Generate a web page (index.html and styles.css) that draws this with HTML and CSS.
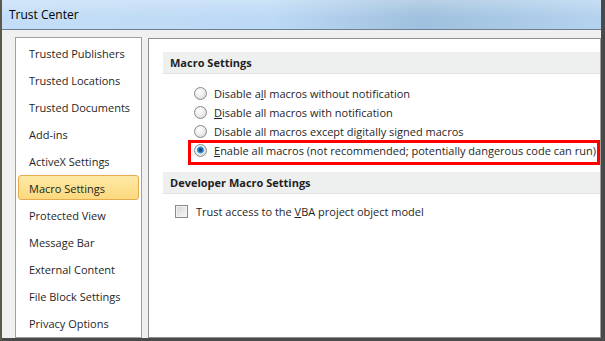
FILE: index.html
```html
<!DOCTYPE html>
<html lang="en">

<head>
    <meta charset="UTF-8">
    <title>Trust Center</title>
    <link rel="stylesheet" href="styles.css">
</head>

<body>
    <div class="window">
        <div class="titlebar">Trust Center</div>

        <div class="content">
            <ul class="nav">
                <li>Trusted Publishers</li>
                <li>Trusted Locations</li>
                <li>Trusted Documents</li>
                <li>Add-ins</li>
                <li>ActiveX Settings</li>
                <li class="selected">Macro Settings</li>
                <li>Protected View</li>
                <li>Message Bar</li>
                <li>External Content</li>
                <li>File Block Settings</li>
                <li>Privacy Options</li>
            </ul>

            <div class="main">
                <div class="section-header">Macro Settings</div>
                <div class="options">
                    <div class="option"><span class="radio"></span><span>Disable a<u>l</u>l macros without notification</span></div>
                    <div class="option"><span class="radio"></span><span><u>D</u>isable all macros with notification</span></div>
                    <div class="option"><span class="radio"></span><span>Disable all macros except di<u>g</u>itally signed macros</span></div>
                    <div class="option highlighted"><span class="radio checked"></span><span><u>E</u>nable all macros (not recommended; potentially dangerous code can run)</span></div>
                </div>

                <div class="section-header dev">Developer Macro Settings</div>
                <div class="options dev">
                    <div class="option"><span class="checkbox"></span><span>Trust access to the <u>V</u>BA project object model</span></div>
                </div>
            </div>
        </div>
    </div>
</body>

</html>
```

FILE: styles.css
```css
html,
body {
    margin: 0;
    width: 605px;
    height: 341px;
    overflow: hidden;
    background-color: #5b5a48;
}

body {
    font-family: "Open Sans", "Noto Sans", sans-serif;
    font-size: 11px;
    color: #1f1f1f;
}

.window {
    margin-left: 2px;
    width: 599px;
    height: 338px;
    background-color: #f0f0f0;
    border-right: 4px solid #4a4a4a;
    border-bottom: 3px solid #4a4a4a;
    display: flex;
    flex-direction: column;
}

.titlebar {
    height: 29px;
    line-height: 29px;
    padding-left: 7px;
    font-size: 12px;
    color: #000;
    border-bottom: 1px solid #6b7f95;
    background:
        linear-gradient(to bottom, rgba(255, 255, 255, 0.25), rgba(255, 255, 255, 0) 60%),
        linear-gradient(to right, #c4def7 0%, #bcd9f5 45%, #9fc0de 70%, #a9c9e6 85%, #b4d3ef 100%);
}

.content {
    flex: 1;
    display: flex;
    gap: 6px;
    padding: 7px 0 1px 13px;
}

.nav {
    list-style: none;
    margin: 0;
    padding: 2px 2px 0;
    width: 121px;
    background-color: #fff;
    border: 1px solid #a0a0a0;
}

.nav li {
    height: 25px;
    line-height: 25px;
    margin-bottom: 2px;
    padding-left: 10px;
    border: 1px solid transparent;
    border-radius: 3px;
    box-sizing: border-box;
    white-space: nowrap;
}

.nav li.selected {
    background: linear-gradient(to bottom, #fde9a6, #fbd97e);
    border-color: #e5ac4f;
}

.main {
    flex: 1;
    margin-top: 1px;
    background-color: #fff;
    border: 1px solid #8e8f8f;
    border-right-color: #a0a0a0;
}

.section-header {
    margin: 13px 0 0 14px;
    height: 21px;
    line-height: 21px;
    padding-left: 7px;
    background-color: #eef0f0;
    border-bottom: 1px solid #e3e6e6;
    font-weight: bold;
}

.section-header.dev {
    margin-top: 12px;
}

.options {
    padding: 10px 0 0 45px;
}

.options.dev {
    padding: 8px 0 0 26px;
}

.option {
    position: relative;
    display: flex;
    align-items: center;
    height: 19px;
    white-space: nowrap;
}

.radio {
    width: 13px;
    height: 13px;
    margin-right: 7px;
    border-radius: 50%;
    box-sizing: border-box;
    border: 1px solid #8a8a8a;
    background: radial-gradient(circle at 40% 35%, #ffffff 0%, #f0f0f0 40%, #cfcfcf 100%);
}

.radio.checked {
    background:
        radial-gradient(circle at 50% 45%, #0f3d6a 0%, #1e6eb0 25%, #5fb2e8 42%, transparent 46%),
        radial-gradient(circle at 40% 35%, #ffffff 0%, #f0f0f0 40%, #cfcfcf 100%);
}

.checkbox {
    width: 13px;
    height: 13px;
    margin-right: 8px;
    box-sizing: border-box;
    border: 1px solid #8a8a8a;
    box-shadow: inset 0 0 0 1px #f4f4f4;
    background: linear-gradient(135deg, #d6d6d6, #f8f8f8);
}

.option.highlighted::after {
    content: "";
    position: absolute;
    left: -6px;
    right: 0;
    top: -1px;
    bottom: -5px;
    border: 3px solid #ff0000;
}
```
